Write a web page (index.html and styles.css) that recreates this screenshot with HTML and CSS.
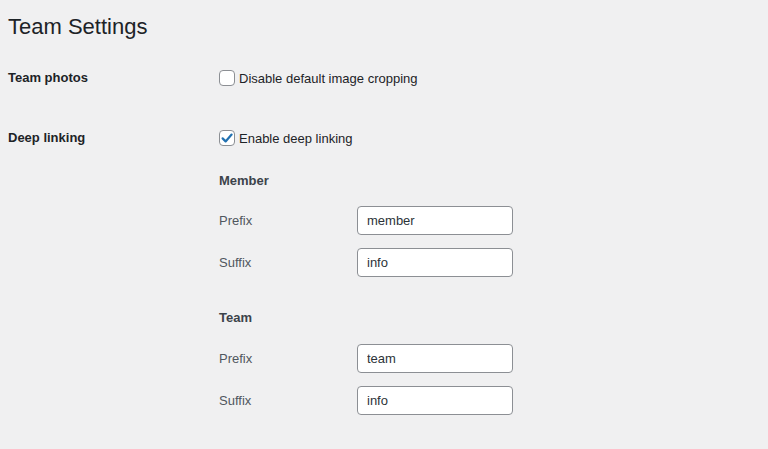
FILE: index.html
```html
<!DOCTYPE html>
<html lang="en">
<head>
    <meta charset="UTF-8">
    <meta name="viewport" content="width=device-width, initial-scale=1.0">
    <title>Team Settings</title>
    <link rel="stylesheet" href="styles.css">
</head>
<body>
    <div class="wrap">
        <h1 class="page-title">Team Settings</h1>

        <div class="form-row first">
            <div class="row-label">Team photos</div>
            <div class="row-field">
                <label class="check">
                    <span class="checkbox"></span>
                    Disable default image cropping
                </label>
            </div>
        </div>

        <div class="form-row second">
            <div class="row-label">Deep linking</div>
            <div class="row-field">
                <label class="check">
                    <span class="checkbox checked">
                        <svg viewBox="0 0 16 16" width="16" height="16">
                            <path d="M3.6 8.4 L6.6 11.4 L12.6 4.6" fill="none" stroke="#2271b1" stroke-width="2.2" stroke-linecap="round" stroke-linejoin="round"/>
                        </svg>
                    </span>
                    Enable deep linking
                </label>

                <div class="group member">
                    <div class="group-title">Member</div>
                    <div class="sub-rows">
                        <div class="sub-row">
                            <div class="sub-label">Prefix</div>
                            <input class="text-input" type="text" value="member">
                        </div>
                        <div class="sub-row">
                            <div class="sub-label">Suffix</div>
                            <input class="text-input" type="text" value="info">
                        </div>
                    </div>
                </div>

                <div class="group team">
                    <div class="group-title">Team</div>
                    <div class="sub-rows">
                        <div class="sub-row">
                            <div class="sub-label">Prefix</div>
                            <input class="text-input" type="text" value="team">
                        </div>
                        <div class="sub-row">
                            <div class="sub-label">Suffix</div>
                            <input class="text-input" type="text" value="info">
                        </div>
                    </div>
                </div>
            </div>
        </div>
    </div>
</body>
</html>
```

FILE: styles.css
```css
:root {
    --bg: #f0f0f1;
    --text: #1d2327;
    --muted: #50575e;
    --border: #8c8f94;
}

body {
    margin: 0;
    background: var(--bg);
    color: var(--text);
    font-family: 'Liberation Sans', Arial, sans-serif;
    font-size: 13px;
}

.wrap {
    padding: 0 8px;
}

.page-title {
    margin: 12px 0 0;
    font-size: 22px;
    line-height: 29px;
    font-weight: 400;
    color: var(--text);
}

.form-row {
    display: flex;
}

.form-row.first {
    margin-top: 27px;
}

.form-row.second {
    margin-top: 40px;
}

.row-label {
    width: 211px;
    line-height: 20px;
    font-size: 13px;
    font-weight: 700;
    color: var(--text);
}

.row-field {
    display: flex;
    flex-direction: column;
}

.check {
    display: flex;
    align-items: center;
    gap: 4px;
    height: 20px;
    font-size: 13px;
    color: var(--text);
}

.checkbox {
    width: 14px;
    height: 14px;
    border: 1px solid var(--border);
    border-radius: 4px;
    background: #fff;
    display: flex;
    align-items: center;
    justify-content: center;
    box-sizing: content-box;
}

.checkbox svg {
    flex: none;
}

.group-title {
    line-height: 20px;
    font-weight: 700;
    color: #3c434a;
}

.group.member {
    margin-top: 23px;
}

.group.member .sub-rows {
    margin-top: 15px;
}

.group.team {
    margin-top: 31px;
}

.group.team .sub-rows {
    margin-top: 16px;
}

.sub-rows {
    display: flex;
    flex-direction: column;
    gap: 13px;
}

.sub-row {
    display: flex;
    align-items: center;
}

.sub-label {
    width: 138px;
    color: var(--muted);
}

.text-input {
    width: 156px;
    height: 29px;
    box-sizing: border-box;
    padding: 0 9px;
    margin: 0;
    border: 1px solid var(--border);
    border-radius: 4px;
    background: #fff;
    color: #2c3338;
    font-family: inherit;
    font-size: 13px;
    outline: none;
}
```
